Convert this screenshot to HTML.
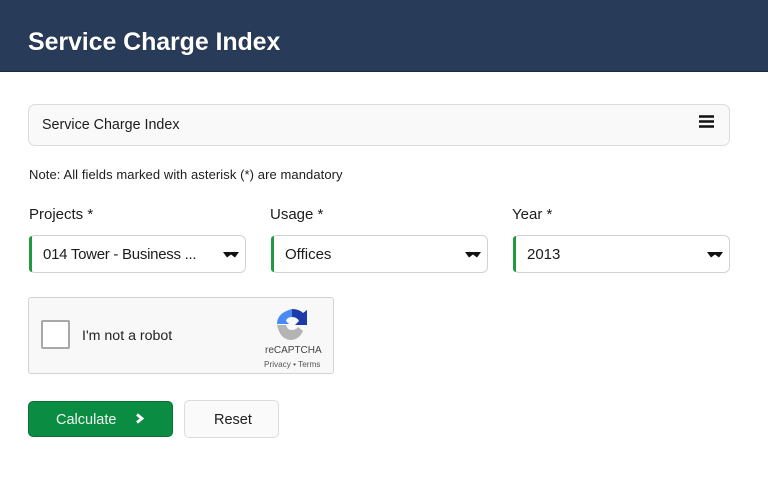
<!DOCTYPE html>
<html><head><meta charset="utf-8">
<style>
html,body{margin:0;padding:0;width:768px;height:480px;overflow:hidden;background:#fff;font-family:"Liberation Sans",sans-serif;color:#1c1c1c}
.a{position:absolute;white-space:nowrap}
.hdr{left:0;top:0;width:768px;height:71px;background:#283b59;border-bottom:1px solid #1b2a40}
.sel{position:absolute;top:235px;width:215px;height:36px;background:#fff;border:1px solid #d2d2d2;border-radius:6px}
.sel i{position:absolute;left:-1px;top:0;width:2.500px;height:36px;background:#1f9a3e;border-radius:4px 0 0 4px}
.sel span{position:absolute;left:13px;top:9.500px;font-size:15px;line-height:18px;white-space:nowrap}
.sel svg{position:absolute;right:5px;top:16px}
.lab{font-size:15px;line-height:18px;top:205.500px}
</style></head><body>
<div class="a hdr"></div>
<div class="a" style="left:28px;top:26.500px;font-size:25px;line-height:30px;font-weight:bold;color:#fff;letter-spacing:-.1px;text-shadow:0 0 1px #111c2c">Service Charge Index</div>

<div class="a" style="left:28px;top:104px;width:700px;height:40px;background:#f9f9f9;border:1px solid #dcdcdc;border-radius:7px"></div>
<div class="a" style="left:42px;top:116px;font-size:14.300px;line-height:18px">Service Charge Index</div>
<svg class="a" style="left:699px;top:115px" width="16" height="14"><path d="M0 1.500H15M0 6.500H15M0 11.500H15" stroke="#111" stroke-width="2.500"/></svg>

<div class="a" style="left:29px;top:166px;font-size:13px;line-height:17px;letter-spacing:.08px">Note: All fields marked with asterisk (*) are mandatory</div>

<div class="a lab" style="left:29px">Projects *</div>
<div class="a lab" style="left:270px">Usage *</div>
<div class="a lab" style="left:512px">Year *</div>

<div class="sel" style="left:29px"><i></i><span style="letter-spacing:-.27px">014 Tower - Business ...</span><svg width="17" height="6"><path d="M0 0H16L12 5.500L8 2.500L4 5.500Z" fill="#111"/></svg></div>
<div class="sel" style="left:271px"><i></i><span>Offices</span><svg width="17" height="6"><path d="M0 0H16L12 5.500L8 2.500L4 5.500Z" fill="#111"/></svg></div>
<div class="sel" style="left:513px"><i></i><span>2013</span><svg width="17" height="6"><path d="M0 0H16L12 5.500L8 2.500L4 5.500Z" fill="#111"/></svg></div>

<div class="a" style="left:28px;top:297px;width:304px;height:75px;background:#f8f8f8;border:1px solid #d3d3d3;border-radius:3px"></div>
<div class="a" style="left:41px;top:320px;width:25px;height:25px;background:#fff;border:2px solid #a8a8a8;border-radius:2px"></div>
<div class="a" style="left:82px;top:327px;font-size:14.200px;line-height:18px;color:#222">I'm not a robot</div>
<svg class="a" style="left:276px;top:309px" width="32" height="32" viewBox="0 0 32 32">
<path d="M1 16H10Q11 21 16 21Q20 21 22 18L27 22Q23 31 14 31Q4 30 1 16Z" fill="#b4b4b4"/>
<path d="M1 15Q1 4 16 0V8Q11 8 10 12L13 15Z" fill="#4a8af4"/>
<path d="M16 0Q23 0 27 4L31 1V16H19L23 12Q21 8 16 8Z" fill="#1c3aa9"/>
</svg>
<div class="a" style="left:265px;top:345px;font-size:10px;line-height:12px;color:#444">reCAPTCHA</div>
<div class="a" style="left:264px;top:360px;font-size:8.200px;line-height:10px;color:#555">Privacy • Terms</div>

<div class="a" style="left:28px;top:401px;width:143px;height:34px;background:#0b8c43;border:1px solid #0a7035;border-radius:5px"></div>
<div class="a" style="left:56px;top:411px;font-size:14.500px;line-height:18px;color:#eef5ef">Calculate</div>
<svg class="a" style="left:135px;top:413px" width="10" height="12"><path d="M2 1.500L7 5.500L2 9.500" fill="none" stroke="#fff" stroke-width="2.800"/></svg>

<div class="a" style="left:184px;top:400px;width:93px;height:36px;background:#fafafa;border:1px solid #dcdcdc;border-radius:5px"></div>
<div class="a" style="left:214px;top:411px;font-size:14.500px;line-height:18px">Reset</div>
</body></html>
